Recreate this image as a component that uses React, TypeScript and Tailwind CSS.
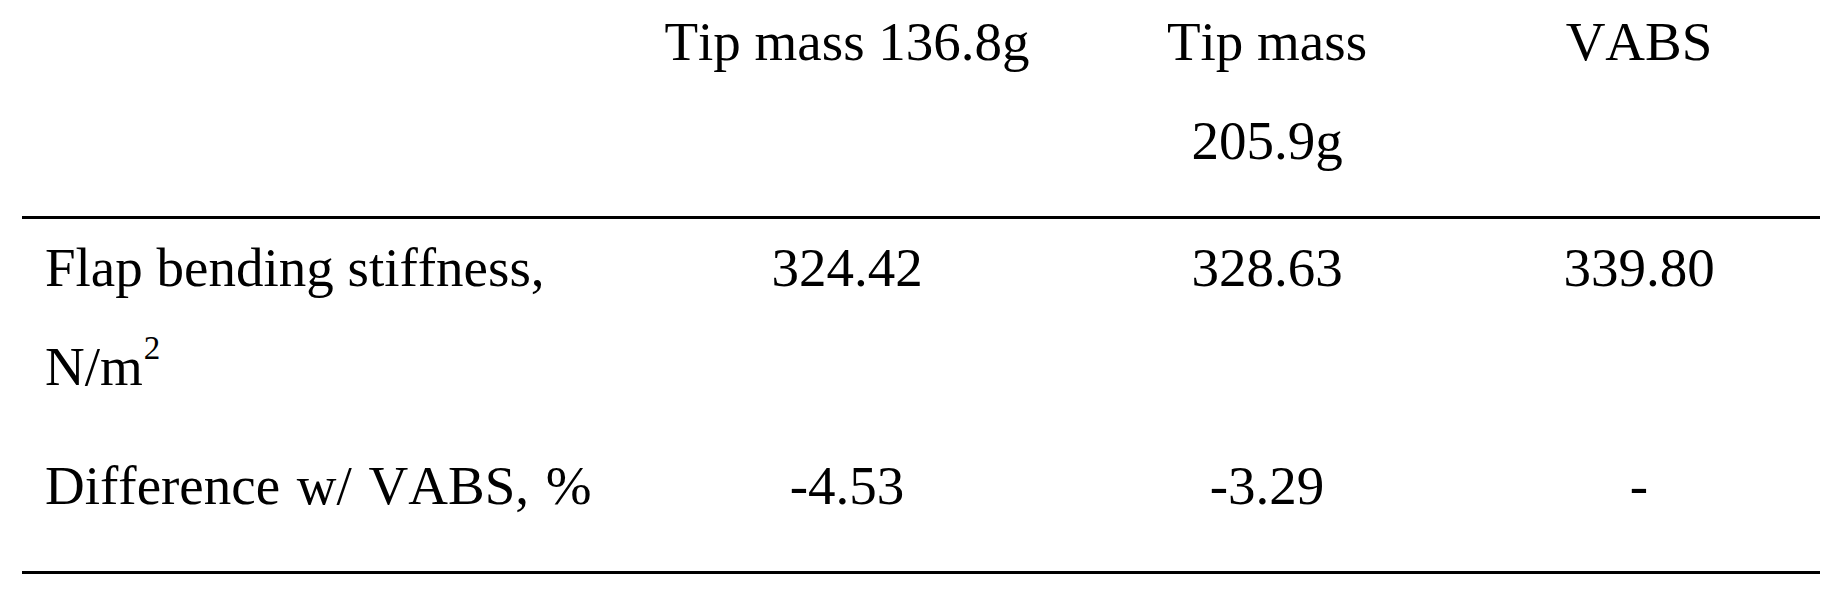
import React from "react";

export default function App() {
  return (
    <div className="w-[1840px] h-[600px] bg-white overflow-hidden text-black font-['Liberation_Serif','Times_New_Roman',serif] text-[55px] leading-[99px] [font-kerning:none] [font-variant-ligatures:none]">
      <div className="ml-[22px] w-[1798px]">
        <div className="grid grid-cols-[596px_458px_382px_362px] -mt-[8px]">
          <div className="pl-[23px]"></div>
          <div className="text-center">Tip mass 136.8g</div>
          <div className="text-center">
            Tip mass
            <br />
            205.9g
          </div>
          <div className="text-center">VABS</div>
        </div>
        <div className="mt-[26px] h-[3px] bg-black"></div>
        <div className="grid grid-cols-[596px_458px_382px_362px] -mt-[1px]">
          <div className="pl-[23px]">
            Flap bending stiffness,
            <br />
            N/m<span className="relative top-[-26px] pl-[1px] text-[33px] leading-none align-baseline">2</span>
          </div>
          <div className="text-center">324.42</div>
          <div className="text-center">328.63</div>
          <div className="text-center">339.80</div>
        </div>
        <div className="grid grid-cols-[596px_458px_382px_362px] mt-[20px]">
          <div className="pl-[23px] whitespace-nowrap [word-spacing:3px]">Difference w/ VABS, %</div>
          <div className="text-center">-4.53</div>
          <div className="text-center">-3.29</div>
          <div className="text-center">-</div>
        </div>
        <div className="mt-[36px] h-[3px] bg-black"></div>
      </div>
    </div>
  );
}
